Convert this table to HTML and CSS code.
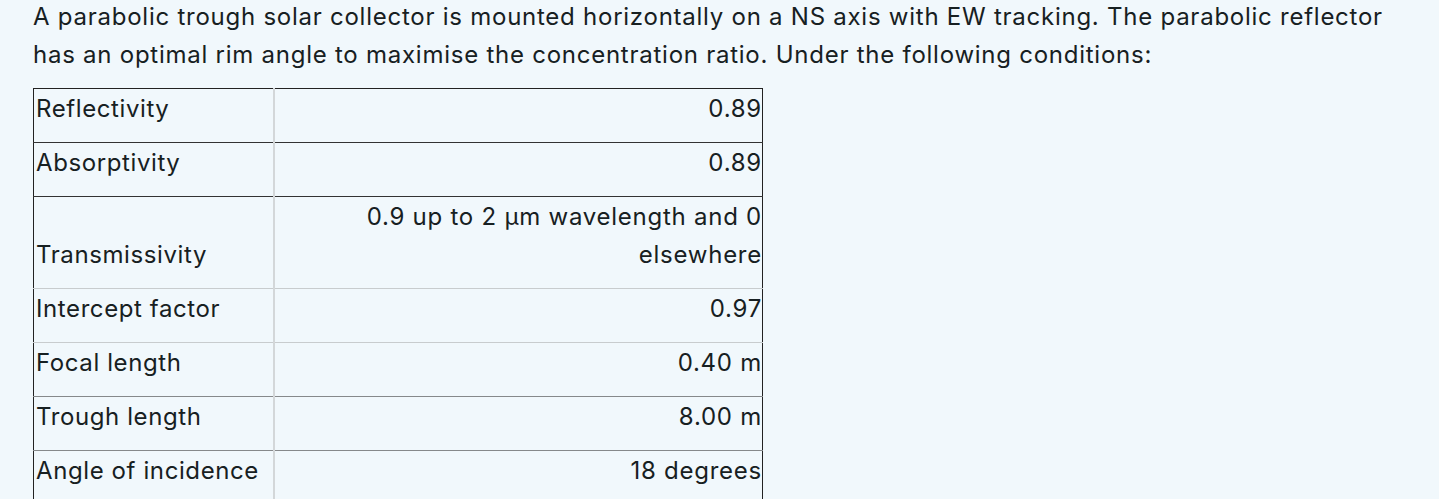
FILE: index.html
```html
<!DOCTYPE html>
<html lang="en">
<head>
<meta charset="utf-8">
<title>Parabolic trough</title>
<link rel="stylesheet" href="styles.css">
</head>
<body>
<div class="content">
  <p class="intro">A parabolic trough solar collector is mounted horizontally on a NS axis with EW tracking. The parabolic reflector has an optimal rim angle to maximise the concentration ratio. Under the following conditions:</p>
  <table class="data">
    <tbody>
      <tr class="r-dark"><td class="label">Reflectivity</td><td class="value">0.89</td></tr>
      <tr class="r-dark"><td class="label">Absorptivity</td><td class="value">0.89</td></tr>
      <tr class="r-dark"><td class="label">Transmissivity</td><td class="value">0.9 up to 2 µm wavelength and 0 elsewhere</td></tr>
      <tr class="r-light"><td class="label">Intercept factor</td><td class="value">0.97</td></tr>
      <tr class="r-light"><td class="label">Focal length</td><td class="value">0.40 m</td></tr>
      <tr class="r-mid"><td class="label">Trough length</td><td class="value">8.00 m</td></tr>
      <tr class="r-mid"><td class="label">Angle of incidence</td><td class="value">18 degrees</td></tr>
    </tbody>
  </table>
</div>
</body>
</html>
```

FILE: styles.css
```css
html, body {
  margin: 0;
  padding: 0;
  background: #f1f8fc;
}
body {
  font-family: Inter, "Noto Sans", sans-serif;
  font-size: 24px;
  letter-spacing: 0.75px;
  line-height: 38px;
  color: #172022;
}
.content {
  padding: 0 33px;
}
.intro {
  margin: -2px 0 14px 0;
}
.data {
  border-collapse: collapse;
  width: 730px;
  border-left: 1px solid #222;
  border-right: 1px solid #222;
  border-top: 1px solid #222;
}
.data td {
  vertical-align: bottom;
  padding: 1px 0 14px 2px;
}
.data .label {
  width: 237px;
  letter-spacing: 0.6px;
  border-right: 2px solid #d3d7d9;
}
.data .value {
  text-align: right;
}
.r-dark td {
  border-top: 1px solid #333;
}
.r-light td {
  border-top: 1px solid #c8ccce;
}
.r-mid td {
  border-top: 1px solid #86898b;
}
.data tr:first-child td {
  border-top: 1px solid #222;
}
```
